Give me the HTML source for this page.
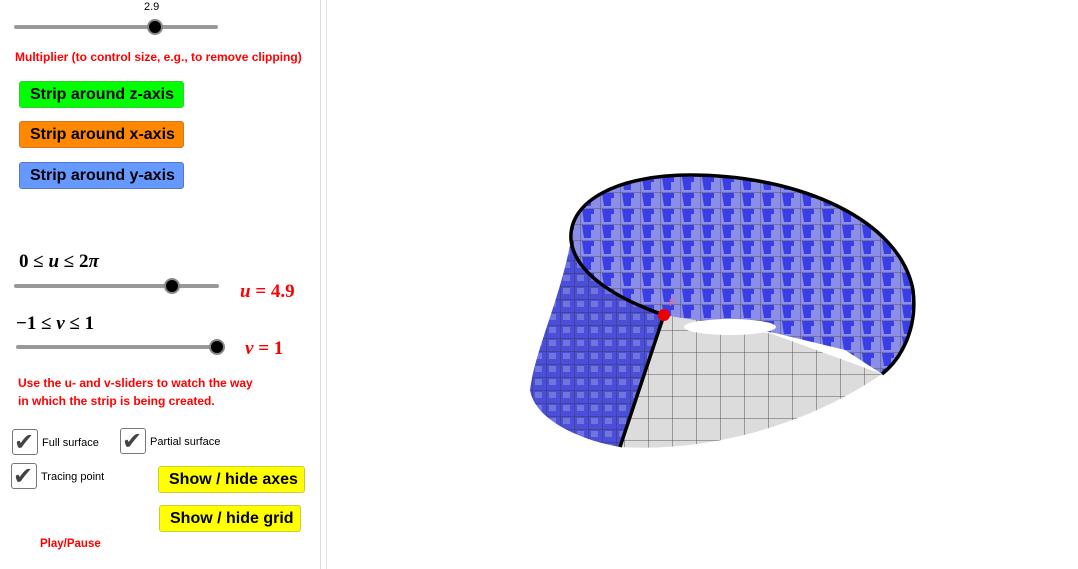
<!DOCTYPE html><html><head><style>
body{margin:0;width:1078px;height:569px;background:#fff;position:relative;overflow:hidden;font-family:"Liberation Sans",sans-serif}
.a{position:absolute}
.btn{position:absolute;border-radius:3px;font-weight:bold;font-size:16px;box-sizing:border-box;padding-left:10px;line-height:25px}
.track{position:absolute;height:4px;background:#999;border-radius:2px}
.knob{position:absolute;width:12px;height:12px;border-radius:50%;background:#000;border:2px solid #888;box-sizing:content-box}
.red{color:#f00;font-weight:bold;font-size:12px}
.cb{position:absolute;width:24px;height:24px;border:1px solid #777;border-radius:3px}
.m{font-family:"Liberation Serif",serif;font-weight:bold;font-size:19px}
</style></head><body>
<div class="a" style="left:320px;top:0;width:1px;height:569px;background:#ddd"></div>
<div class="a" style="left:326px;top:0;width:1px;height:569px;background:#e4e4e4"></div>
<div class="a" style="left:144px;top:1px;font-size:11px">2.9</div>
<div class="track" style="left:14px;top:25px;width:204px"></div>
<div class="knob" style="left:147px;top:19px"></div>
<div class="a red" style="left:15px;top:50px">Multiplier (to control size, e.g., to remove clipping)</div>
<div class="btn" style="left:19px;top:81px;width:165px;height:27px;background:#0f0;border:1px solid #3c3">Strip around z-axis</div>
<div class="btn" style="left:19px;top:121px;width:165px;height:27px;background:#f80;border:1px solid #c73">Strip around x-axis</div>
<div class="btn" style="left:19px;top:162px;width:165px;height:27px;background:#69f;border:1px solid #57c">Strip around y-axis</div>
<div class="a m" style="left:19px;top:251px">0 ≤ <i>u</i> ≤ 2<i>π</i></div>
<div class="track" style="left:14px;top:284px;width:205px"></div>
<div class="knob" style="left:164px;top:278px"></div>
<div class="a m" style="left:240px;top:281px;color:#f00"><i>u</i> = 4.9</div>
<div class="a m" style="left:16px;top:313px">−1 ≤ <i>v</i> ≤ 1</div>
<div class="track" style="left:16px;top:345px;width:203px"></div>
<div class="knob" style="left:209px;top:339px"></div>
<div class="a m" style="left:245px;top:338px;color:#f00"><i>v</i> = 1</div>
<div class="a red" style="left:18px;top:374px;line-height:18px">Use the u- and v-sliders to watch the way<br>in which the strip is being created.</div>
<div class="cb" style="left:12px;top:429px"></div><div class="a" style="left:14px;top:428px;font-size:24px;color:#444">✔</div>
<div class="a" style="left:42px;top:437px;font-size:11px">Full surface</div>
<div class="cb" style="left:120px;top:428px"></div><div class="a" style="left:122px;top:427px;font-size:24px;color:#444">✔</div>
<div class="a" style="left:150px;top:436px;font-size:11px">Partial surface</div>
<div class="cb" style="left:11px;top:463px"></div><div class="a" style="left:13px;top:462px;font-size:24px;color:#444">✔</div>
<div class="a" style="left:41px;top:471px;font-size:11px">Tracing point</div>
<div class="btn" style="left:158px;top:466px;width:147px;height:27px;background:#ff0;border:1px solid #cc3">Show / hide axes</div>
<div class="btn" style="left:159px;top:505px;width:142px;height:27px;background:#ff0;border:1px solid #cc3">Show / hide grid</div>
<div class="a red" style="left:40px;top:538px;font-size:11.5px">Play/Pause</div>
<svg class="a" style="left:0;top:0" width="1078" height="569">
<defs>
<pattern id="g" width="20" height="16" patternUnits="userSpaceOnUse"><rect width="20" height="16" fill="#8a8ee6"/><path d="M2 1H14V6H11V14H4Z" fill="#3a3ee6"/><path d="M0 0H20M0 0V16" stroke="#444" stroke-width="0.8"/></pattern>
<pattern id="g2" width="14" height="13" patternUnits="userSpaceOnUse"><rect width="14" height="13" fill="#4a4ed8"/><rect x="3" y="2" width="7" height="6" fill="#7074dd"/><path d="M0 0H14M0 0V13" stroke="#333" stroke-width="0.7"/></pattern>
<pattern id="gr" width="24" height="22" patternUnits="userSpaceOnUse"><rect width="24" height="22" fill="#dcdcdc"/><path d="M0 0H24M0 0V22" stroke="#333" stroke-width="0.8"/></pattern>
</defs>
<path d="M664,315 C620,300 575,275 571,240 C568,200 620,175 690,175 C800,175 900,220 913,290 C918,330 900,360 882,374 L845,350 L775,333 L700,322 Z" fill="url(#g)"/>
<path d="M571,240 C560,300 535,350 530,390 C535,420 580,440 620,447 L664,315 C620,300 575,275 571,240 Z" fill="url(#g2)"/>
<path d="M664,315 L620,447 C700,452 800,430 882,374 L775,335 C740,325 690,320 664,315 Z" fill="url(#gr)"/>
<ellipse cx="730" cy="327" rx="46" ry="8" fill="#fff"/>
<path d="M664,315 C620,300 575,275 571,240 C568,200 620,175 690,175 C800,175 900,220 913,290 C918,330 900,360 882,374" fill="none" stroke="#000" stroke-width="3.5"/>
<path d="M664,315 L620,447" stroke="#000" stroke-width="3.5"/>
<circle cx="664" cy="315" r="6" fill="#e00"/>
<text x="669" y="306" font-size="10" fill="#f66" font-family="Liberation Sans">P</text>
</svg>
</body></html>
